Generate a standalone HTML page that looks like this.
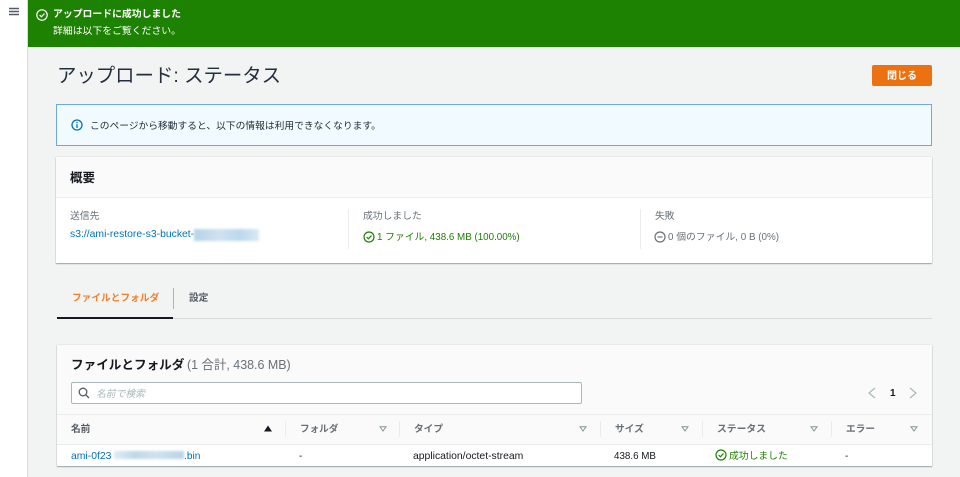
<!DOCTYPE html>
<html lang="ja"><head><meta charset="utf-8"><style>
*{box-sizing:border-box}
html,body{margin:0;padding:0;background:#f2f3f3}
body{width:960px;height:477px;position:relative;overflow:hidden;font-family:"Liberation Sans","Noto Sans CJK JP",sans-serif;color:#16191f;font-size:9.8px;filter:blur(.35px)}
.a{position:absolute;white-space:nowrap;line-height:12px}
.b{font-weight:700}
.box{position:absolute;background:#fff}
.sep{position:absolute;width:1px;background:#eaeded}
.blur{position:absolute;filter:blur(1.2px)}
</style></head><body>
<div class="box" style="left:0;top:0;width:28px;height:477px;border-right:1px solid #d5dbdb"></div>
<svg class="a" style="left:9px;top:7px" width="11" height="10"><path d="M0 1.5H10M0 4.5H10M0 7.5H10" stroke="#545b64" stroke-width="1.4"/></svg>
<div class="box" style="left:28px;top:0;width:932px;height:47px;background:#1d8102"></div>
<svg class="a" style="left:36px;top:9px" width="12" height="12" fill="none" stroke="#fff" stroke-width="1.2"><circle cx="6" cy="6" r="5.2"/><path d="M3.6 6l1.8 1.8L8.5 4.6"/></svg>
<div class="a b" style="left:53px;top:9px;color:#fff;font-size:9.85px">アップロードに成功しました</div>
<div class="a" style="left:53px;top:26px;color:#fff;font-size:9.85px">詳細は以下をご覧ください。</div>

<div class="a" style="left:57px;top:63px;font-size:19.4px;line-height:26px;color:#232f3e">アップロード: ステータス</div>
<div class="box" style="left:872px;top:65px;width:60px;height:21px;background:#ec7211;border-radius:2px"></div>
<div class="a b" style="left:872px;top:71px;width:60px;text-align:center;color:#fff;font-size:10px">閉じる</div>

<div class="box" style="left:56px;top:104px;width:876px;height:42px;background:#f1faff;border:1px solid #6ea9dc"></div>
<svg class="a" style="left:71px;top:119px" width="12" height="12" fill="none" stroke="#0073bb" stroke-width="1.3"><circle cx="6" cy="6" r="5"/><path d="M6 5.2V9M6 3v1.3"/></svg>
<div class="a" style="left:90px;top:120.5px;font-size:9.75px;color:#232f3e">このページから移動すると、以下の情報は利用できなくなります。</div>

<div class="box" style="left:56px;top:157px;width:876px;height:106px;box-shadow:0 1px 1px rgba(0,28,36,.35),0 0 1px rgba(0,28,36,.2)"></div>
<div class="box" style="left:56px;top:157px;width:876px;height:41px;background:#fafafa;border-bottom:1px solid #eaeded"></div>
<div class="a b" style="left:70px;top:171px;font-size:12.5px;line-height:15px">概要</div>
<div class="a" style="left:70px;top:211px;color:#687078;font-size:9.8px">送信先</div>
<div class="a" style="left:70px;top:229px;color:#0073bb;font-size:10.4px">s3://ami-restore-s3-bucket-</div>
<div class="blur" style="left:194px;top:229px;width:65px;height:12px;background:linear-gradient(90deg,#b5d3ea,#cfe2f1 40%,#bcd7ec 70%,#dbe9f4)"></div>
<div class="sep" style="left:348px;top:209px;height:40px"></div>
<div class="a" style="left:363px;top:211px;color:#687078;font-size:9.8px">成功しました</div>
<svg class="a" style="left:363px;top:231px" width="12" height="12" fill="none" stroke="#1d8102" stroke-width="1.2"><circle cx="6" cy="6" r="5"/><path d="M3.6 6l1.8 1.8L8.5 4.6"/></svg>
<div class="a" style="left:377px;top:232px;color:#1d8102;font-size:9.8px">1 ファイル, 438.6 MB (100.00%)</div>
<div class="sep" style="left:640px;top:209px;height:40px"></div>
<div class="a" style="left:655px;top:211px;color:#687078;font-size:9.8px">失敗</div>
<svg class="a" style="left:654px;top:231px" width="12" height="12" fill="none" stroke="#687078" stroke-width="1.2"><circle cx="6" cy="6" r="5"/><path d="M3.5 6h5"/></svg>
<div class="a" style="left:668px;top:232px;color:#687078;font-size:9.85px">0 個のファイル, 0 B (0%)</div>

<div class="a b" style="left:72px;top:293px;color:#f0802a;font-size:9.7px">ファイルとフォルダ</div>
<div class="sep" style="left:173px;top:288px;height:21px;background:#aab7b8"></div>
<div class="a b" style="left:189px;top:293px;color:#545b64;font-size:9.7px">設定</div>
<div class="box" style="left:57px;top:318px;width:875px;height:1px;background:#d5dbdb"></div>
<div class="box" style="left:57px;top:317px;width:116px;height:2px;background:#16191f"></div>

<div class="box" style="left:57px;top:345px;width:875px;height:121px;box-shadow:0 1px 1px rgba(0,28,36,.35),0 0 1px rgba(0,28,36,.2)"></div>
<div class="box" style="left:57px;top:345px;width:875px;height:100px;background:#fafafa"></div>
<div class="a b" style="left:71px;top:357px;font-size:12.6px;line-height:16px">ファイルとフォルダ</div>
<div class="a" style="left:187px;top:357px;line-height:16px;color:#687078;font-size:12.45px">(1 合計, 438.6 MB)</div>
<div class="box" style="left:71px;top:382px;width:511px;height:22px;border:1px solid #aab7b8;border-radius:2px"></div>
<svg class="a" style="left:78px;top:387px" width="12" height="12" fill="none" stroke="#545b64" stroke-width="1.3"><circle cx="5" cy="5" r="3.8"/><path d="M8 8l3 3"/></svg>
<div class="a" style="left:96px;top:389px;color:#aab7b8;font-size:9.8px;font-style:italic">名前で検索</div>
<svg class="a" style="left:867px;top:386px" width="10" height="14" fill="none" stroke="#aab7b8" stroke-width="1.2"><path d="M8 2L2 7l6 5"/></svg>
<div class="a b" style="left:890px;top:388px;font-size:10px">1</div>
<svg class="a" style="left:908px;top:386px" width="10" height="14" fill="none" stroke="#aab7b8" stroke-width="1.2"><path d="M2 2l6 5-6 5"/></svg>

<div class="box" style="left:57px;top:414px;width:875px;height:1px;background:#eaeded"></div>
<div class="box" style="left:57px;top:444px;width:875px;height:1px;background:#eaeded"></div>
<div class="a b" style="left:71px;top:424px;color:#545b64;font-size:9.7px">名前</div>
<svg class="a" style="left:264px;top:425px" width="8" height="7"><path d="M0 6.5L4 .5l4 6z" fill="#16191f"/></svg>
<div class="sep" style="left:285px;top:421px;height:16px"></div>
<div class="a b" style="left:300px;top:424px;color:#687078;font-size:9.6px">フォルダ</div>
<svg class="a" style="left:379px;top:426px" width="8" height="6" fill="none" stroke="#879596"><path d="M1 .8h6L4 5z"/></svg>
<div class="sep" style="left:399px;top:421px;height:16px"></div>
<div class="a b" style="left:414px;top:424px;color:#687078;font-size:9.7px">タイプ</div>
<svg class="a" style="left:579px;top:426px" width="8" height="6" fill="none" stroke="#879596"><path d="M1 .8h6L4 5z"/></svg>
<div class="sep" style="left:600px;top:421px;height:16px"></div>
<div class="a b" style="left:615px;top:424px;color:#687078;font-size:9.7px">サイズ</div>
<svg class="a" style="left:681px;top:426px" width="8" height="6" fill="none" stroke="#879596"><path d="M1 .8h6L4 5z"/></svg>
<div class="sep" style="left:702px;top:421px;height:16px"></div>
<div class="a b" style="left:717px;top:424px;color:#687078;font-size:9.8px">ステータス</div>
<svg class="a" style="left:810px;top:426px" width="8" height="6" fill="none" stroke="#879596"><path d="M1 .8h6L4 5z"/></svg>
<div class="sep" style="left:831px;top:421px;height:16px"></div>
<div class="a b" style="left:846px;top:424px;color:#687078;font-size:9.7px">エラー</div>
<svg class="a" style="left:910px;top:426px" width="8" height="6" fill="none" stroke="#879596"><path d="M1 .8h6L4 5z"/></svg>

<div class="a" style="left:71px;top:450.5px;color:#0073bb;font-size:10.4px">ami-0f23</div>
<div class="blur" style="left:114px;top:451px;width:70px;height:8px;background:linear-gradient(90deg,#e0ecf5,#bfd7ea 30%,#d0e1ef 60%,#b9d3e8)"></div>
<div class="a" style="left:184px;top:450.5px;color:#0073bb;font-size:10.2px">.bin</div>
<div class="a" style="left:299px;top:450.5px;font-size:10px">-</div>
<div class="a" style="left:413px;top:450.5px;font-size:10.4px">application/octet-stream</div>
<div class="a" style="left:614px;top:450.5px;font-size:9.8px">438.6 MB</div>
<svg class="a" style="left:715px;top:449px" width="12" height="12" fill="none" stroke="#1d8102" stroke-width="1.2"><circle cx="6" cy="6" r="5"/><path d="M3.6 6l1.8 1.8L8.5 4.6"/></svg>
<div class="a" style="left:729px;top:450.5px;color:#1d8102;font-size:9.8px">成功しました</div>
<div class="a" style="left:845px;top:450.5px;font-size:10px">-</div>
</body></html>
